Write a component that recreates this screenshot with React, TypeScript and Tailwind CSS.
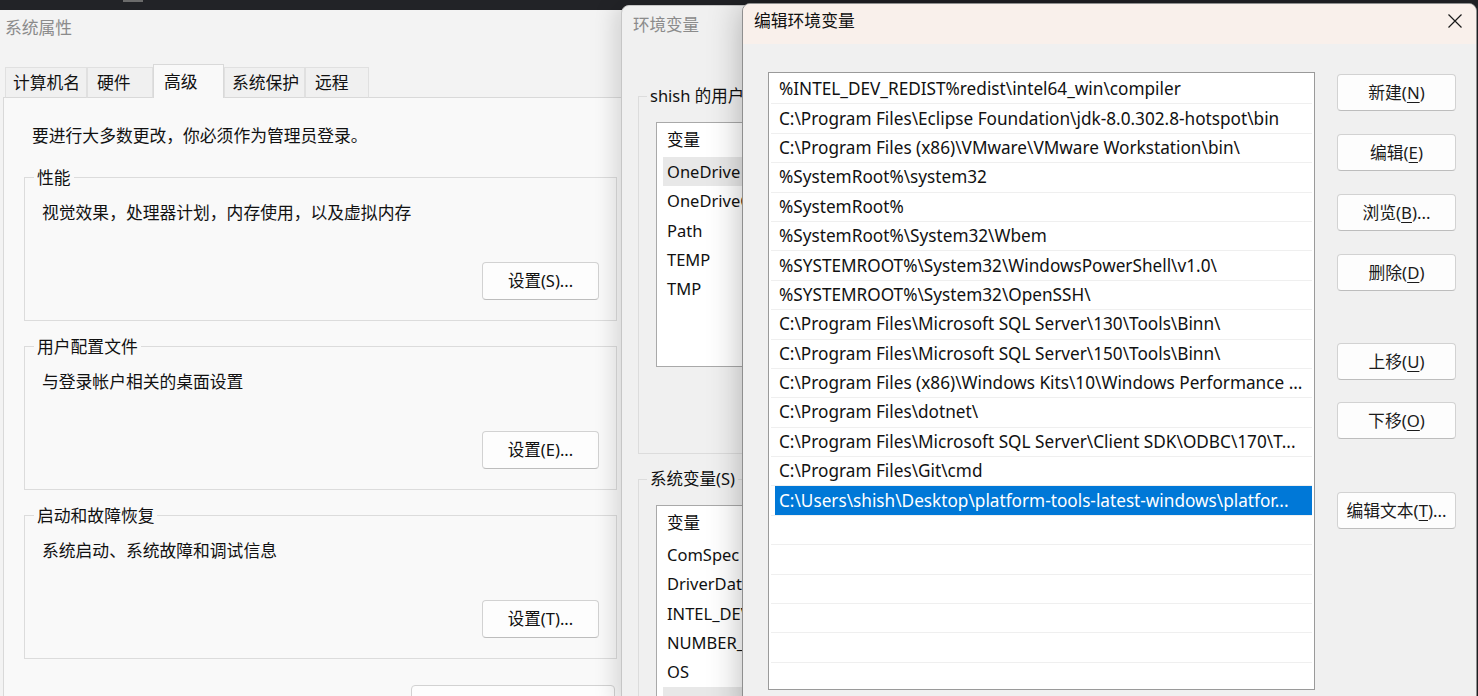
import React from 'react';

const font = "font-['Noto_Sans','Noto_Sans_CJK_SC',sans-serif]";

type BtnProps = { pre: string; key2: string; post?: string; className?: string };

function WinButton({ pre, key2, post = ')', className = '' }: BtnProps) {
  return (
    <div
      className={`flex items-center justify-center rounded-[4px] border border-[#d2d2d2] border-b-[#bdbdbd] bg-[#fdfdfd] text-[16.8px] text-[#1b1b1b] ${className}`}
    >
      <span>
        {pre}
        <span className="underline underline-offset-[3px]">{key2}</span>
        {post}
      </span>
    </div>
  );
}

function GroupBox({ title, desc, button }: { title: string; desc: string; button: string }) {
  return (
    <div className="relative h-[144px] w-[593px] border border-[#dcdcdc]">
      <span className="absolute -top-[11px] left-[9px] bg-[#f9f9f9] px-[3px] leading-[22px]">{title}</span>
      <p className="pl-[17px] pt-[24px] leading-[22px]">{desc}</p>
      <div className="mt-[38px] flex justify-end pr-[17px]">
        <div className="flex h-[38px] w-[117px] items-center justify-center rounded-[4px] border border-[#d2d2d2] border-b-[#bdbdbd] bg-[#fdfdfd] text-[16.5px]">
          {button}
        </div>
      </div>
    </div>
  );
}

const tabs = [
  { name: '计算机名', w: 'w-[82px] pl-[7px]' },
  { name: '硬件', w: 'w-[66px] pl-[9px]' },
  { name: '高级', w: 'w-[71px] pl-[10px]', active: true },
  { name: '系统保护', w: 'w-[81px] pl-[7px]' },
  { name: '远程', w: 'w-[64px] pl-[9px]' },
];

function SystemProperties() {
  return (
    <div className="absolute left-0 top-[10px] h-[686px] w-[660px] overflow-hidden bg-[#f3f3f3] text-[16.8px] text-[#111]">
      <div className="flex h-[36px] items-center pl-[5px] text-[#8b8b8b]">系统属性</div>
      <div className="relative z-10 -mb-px flex items-end pl-[5px] pt-[18px]">
        {tabs.map((t) =>
          t.active ? (
            <div
              key={t.name}
              className={`flex h-[34px] items-start border border-b-0 border-[#d9d9d9] bg-[#f9f9f9] pt-[4px] ${t.w}`}
            >
              {t.name}
            </div>
          ) : (
            <div
              key={t.name}
              className={`flex h-[31px] items-center border border-b-[#d9d9d9] border-[#e0e0e0] bg-[#f0f0f0] pt-[1px] ${t.w}`}
            >
              {t.name}
            </div>
          ),
        )}
      </div>
      <div className="ml-[3px] h-[620px] w-[650px] border border-[#d9d9d9] bg-[#f9f9f9] pl-[20px] pt-[27px]">
        <p className="pl-[8px] leading-[22px]">要进行大多数更改，你必须作为管理员登录。</p>
        <div className="mt-[30px] flex flex-col gap-[25px]">
          <GroupBox title="性能" desc="视觉效果，处理器计划，内存使用，以及虚拟内存" button="设置(S)..." />
          <GroupBox title="用户配置文件" desc="与登录帐户相关的桌面设置" button="设置(E)..." />
          <GroupBox title="启动和故障恢复" desc="系统启动、系统故障和调试信息" button="设置(T)..." />
        </div>
        <div className="ml-[387px] mt-[26px] flex h-[48px] w-[204px] items-center justify-center rounded-[4px] border border-[#d2d2d2] bg-[#fdfdfd] text-[16.5px]">
          环境变量(N)...
        </div>
      </div>
    </div>
  );
}

function VarList({ rows, highlight, height }: { rows: string[]; highlight: number; height: string }) {
  return (
    <div className={`ml-[17px] mt-[25px] w-[420px] overflow-hidden border border-[#a9a9a9] bg-white ${height}`}>
      <div className="flex h-[34px] items-center pl-[10px]">变量</div>
      {rows.map((r, i) => (
        <div key={i} className="h-[29.4px] pl-[6px]">
          <div className={`flex h-full items-center pl-[4px] pt-[1px] ${i === highlight ? 'bg-[#e8e8e8]' : ''}`}>{r}</div>
        </div>
      ))}
    </div>
  );
}

function EnvVariables() {
  return (
    <div className="absolute left-[621px] top-[5px] h-[700px] w-[520px] overflow-hidden rounded-tl-[8px] border border-[#c6c6c6] bg-[#f0f0f0] text-[16.5px] text-[#111] shadow-[-6px_0_22px_rgba(0,0,0,0.14)]">
      <div className="flex h-[38px] items-center pl-[11px] text-[#8b8b8b]">环境变量</div>
      <div className="relative ml-[16px] mt-[52px] h-[358px] w-[480px] border border-[#dcdcdc]">
        <span className="absolute -top-[12px] left-[8px] bg-[#f0f0f0] px-[3px] leading-[22px]">shish 的用户变量(U)</span>
        <VarList rows={['OneDrive', 'OneDriveConsumer', 'Path', 'TEMP', 'TMP']} highlight={0} height="h-[245px]" />
      </div>
      <div className="relative ml-[16px] mt-[25px] h-[300px] w-[480px] border border-[#dcdcdc]">
        <span className="absolute -top-[12px] left-[8px] bg-[#f0f0f0] px-[3px] leading-[22px]">系统变量(S)</span>
        <VarList
          rows={['ComSpec', 'DriverData', 'INTEL_DEV_REDIST', 'NUMBER_OF_PROCESSORS', 'OS', '']}
          highlight={5}
          height="h-[260px]"
        />
      </div>
    </div>
  );
}

const paths = [
  '%INTEL_DEV_REDIST%redist\\intel64_win\\compiler',
  'C:\\Program Files\\Eclipse Foundation\\jdk-8.0.302.8-hotspot\\bin',
  'C:\\Program Files (x86)\\VMware\\VMware Workstation\\bin\\',
  '%SystemRoot%\\system32',
  '%SystemRoot%',
  '%SystemRoot%\\System32\\Wbem',
  '%SYSTEMROOT%\\System32\\WindowsPowerShell\\v1.0\\',
  '%SYSTEMROOT%\\System32\\OpenSSH\\',
  'C:\\Program Files\\Microsoft SQL Server\\130\\Tools\\Binn\\',
  'C:\\Program Files\\Microsoft SQL Server\\150\\Tools\\Binn\\',
  'C:\\Program Files (x86)\\Windows Kits\\10\\Windows Performance ...',
  'C:\\Program Files\\dotnet\\',
  'C:\\Program Files\\Microsoft SQL Server\\Client SDK\\ODBC\\170\\T...',
  'C:\\Program Files\\Git\\cmd',
  'C:\\Users\\shish\\Desktop\\platform-tools-latest-windows\\platfor...',
  '',
  '',
  '',
  '',
  '',
  '',
  '',
];

function EditEnvVariable() {
  return (
    <div className="absolute left-[742px] top-[3px] h-[720px] w-[735px] overflow-hidden rounded-t-[8px] border border-[#8f8f8f] bg-[#f0f0f0] text-[#111] shadow-[0_0_34px_rgba(0,0,0,0.28)]">
      <div className="flex h-[40px] items-start justify-between bg-[#f9f0eb] pl-[11px] pr-[13px] pt-[6px]">
        <span className="text-[16.8px] leading-[22px]">编辑环境变量</span>
        <svg width="16" height="16" viewBox="0 0 16 16" className="mt-[3px]">
          <path d="M1.5 1.5 L14.5 14.5 M14.5 1.5 L1.5 14.5" stroke="#1a1a1a" strokeWidth="1.2" fill="none" />
        </svg>
      </div>
      <div className="flex gap-[22px] pl-[25px] pt-[28px]">
        <div className="h-[618px] w-[547px] overflow-hidden border border-[#9a9a9a] bg-white px-[2px] pt-[2px]">
          {paths.map((p, i) => (
            <div key={i} className="h-[29.4px] border-b border-[#efefef]">
              <div
                className={`ml-[4px] flex h-full items-center overflow-hidden whitespace-nowrap pl-[4px] text-[17.2px] leading-[22px] ${
                  i === 14 ? 'bg-[#0078d7] text-white' : ''
                }`}
              >
                {p}
              </div>
            </div>
          ))}
        </div>
        <div className="flex flex-col pt-[2px]">
          <WinButton pre="新建(" key2="N" className="h-[37px] w-[119px]" />
          <WinButton pre="编辑(" key2="E" className="mt-[23px] h-[37px] w-[119px]" />
          <WinButton pre="浏览(" key2="B" post=")..." className="mt-[23px] h-[37px] w-[119px]" />
          <WinButton pre="删除(" key2="D" className="mt-[23px] h-[37px] w-[119px]" />
          <WinButton pre="上移(" key2="U" className="mt-[52px] h-[37px] w-[119px]" />
          <WinButton pre="下移(" key2="O" className="mt-[22px] h-[37px] w-[119px]" />
          <WinButton pre="编辑文本(" key2="T" post=")..." className="mt-[53px] h-[37px] w-[119px]" />
        </div>
      </div>
    </div>
  );
}

export default function App() {
  return (
    <div className={`relative h-[696px] w-[1478px] overflow-hidden bg-[#222327] ${font}`}>
      <div className="absolute left-[123px] top-0 h-[2px] w-[20px] bg-[#6b6b6b]" />
      <SystemProperties />
      <EnvVariables />
      <EditEnvVariable />
    </div>
  );
}
